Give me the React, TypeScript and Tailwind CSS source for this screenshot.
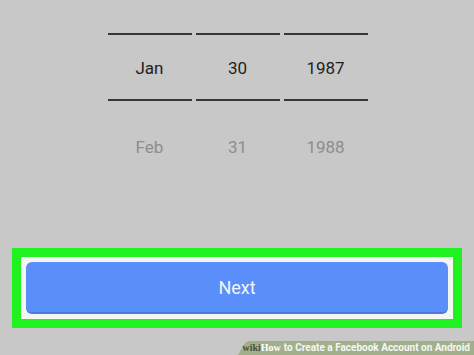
import React from 'react';

const columns = [
    { current: 'Jan', next: 'Feb' },
    { current: '30', next: '31' },
    { current: '1987', next: '1988' },
];

const App: React.FC = () => {
    return (
        <div className="relative w-[474px] h-[355px] overflow-hidden bg-[#c8c8c8] font-['Roboto','Liberation_Sans',sans-serif]">
            {/* date picker */}
            <div className="pt-[33px] flex justify-center gap-[4px] pl-[1px]">
                {columns.map((c) => (
                    <div key={c.current} className="w-[84px] flex flex-col">
                        <div className="h-[2px] bg-[#353535]" />
                        <div className="h-[64px] pt-[3px] flex items-center justify-center text-[17px] text-[#1e1e1e]">
                            {c.current}
                        </div>
                        <div className="h-[2px] bg-[#353535]" />
                        <div className="mt-[36px] h-[20px] leading-[20px] text-center text-[17px] text-[#8d8d8d]">
                            {c.next}
                        </div>
                    </div>
                ))}
            </div>

            {/* next button, highlighted */}
            <div className="mt-[91px] mx-[12px] h-[80px] border-[9px] border-[#1ff21f] bg-[#f4f6f4] p-[5px]">
                <button className="w-full h-full rounded-[6px] bg-[#5a8ef8] border-b-2 border-[#4a7ae0] text-[18px] text-[#f2f6ff] flex items-center justify-center">
                    Next
                </button>
            </div>

            {/* watermark */}
            <div className="absolute right-0 bottom-0 w-[236px] h-[14px]">
                <div className="absolute inset-y-0 left-[4px] right-[-20px] bg-[#a1b08b] rounded-tl-[4px] -skew-x-[30deg]" />
                <div className="relative h-full flex items-center justify-end pr-[4px] text-[10px] font-bold leading-none whitespace-nowrap">
                    <span className="text-[#4a5040] font-['Liberation_Serif',serif]">wiki</span>
                    <span className="text-white font-['Liberation_Serif',serif]">How</span>
                    <span className="text-white/90 ml-[3px]">to Create a Facebook Account on Android</span>
                </div>
            </div>
        </div>
    );
};

export default App;
